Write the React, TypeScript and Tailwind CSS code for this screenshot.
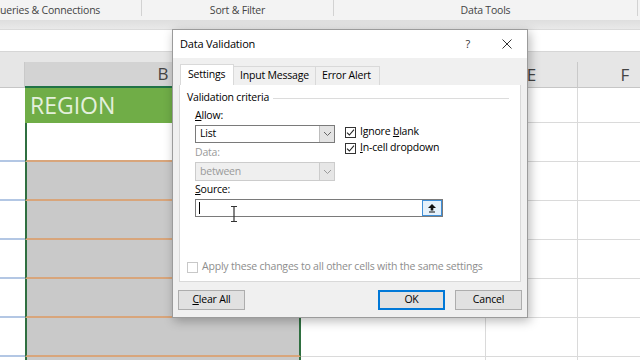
import React from "react";

function Check({ checked, disabled }: { checked?: boolean; disabled?: boolean }) {
  return (
    <div
      className={
        "w-[11px] h-[11px] shrink-0 flex items-center justify-center border bg-white " +
        (disabled ? "border-[#c8c8c8]" : "border-[#333333]")
      }
    >
      {checked && (
        <svg width="9" height="9" viewBox="0 0 9 9">
          <polyline points="1,4.6 3.4,7 8,1.6" fill="none" stroke="#222" strokeWidth="1.1" />
        </svg>
      )}
    </div>
  );
}

function Chevron({ color }: { color: string }) {
  return (
    <svg width="9" height="6" viewBox="0 0 9 6">
      <polyline points="1,1 4.5,4.5 8,1" fill="none" stroke={color} strokeWidth="1" />
    </svg>
  );
}

export default function App() {
  const rowHeights = [39, 39, 39, 39, 39, 39, 39];
  return (
    <div className="relative w-[640px] h-[360px] overflow-hidden bg-white font-['Open_Sans',sans-serif]">
      {/* Ribbon group labels */}
      <div className="flex h-[20px] bg-[#f3f3f3] text-[10.5px] text-[#444444] tracking-[-0.2px]">
        <div className="w-[141px] shrink-0 flex items-start pt-[3px]">
          <span className="whitespace-nowrap">ueries &amp; Connections</span>
        </div>
        <div className="w-px shrink-0 h-[16px] bg-[#d2d2d2]" />
        <div className="w-[191px] shrink-0 flex justify-center pt-[3px]">
          <span>Sort &amp; Filter</span>
        </div>
        <div className="w-px shrink-0 h-[16px] bg-[#d2d2d2]" />
        <div className="w-[303px] shrink-0 flex justify-center pt-[3px]">
          <span>Data Tools</span>
        </div>
        <div className="w-px shrink-0 h-[16px] bg-[#d2d2d2]" />
      </div>
      {/* shadow strip */}
      <div className="h-[9px] bg-gradient-to-b from-[#dedede] to-[#e9e9e9]" />
      {/* formula bar */}
      <div className="h-[22px] bg-white border-t border-[#dadada]" />
      {/* band */}
      <div className="h-[11px] bg-[#e6e6e6] border-t border-[#d6d6d6]" />
      {/* column headers */}
      <div className="flex h-[26px] bg-[#e6e6e6] text-[17px] text-[#444444]">
        <div className="w-[25px] shrink-0 border-r border-[#c9c9c9] border-b border-b-[#c6c6c6]" />
        <div className="w-[276px] shrink-0 bg-[#d3d3d3] border-b-2 border-b-[#217346] flex items-center justify-center">
          <span>B</span>
        </div>
        <div className="w-[185px] shrink-0 border-r border-[#c9c9c9] border-b border-b-[#c6c6c6]" />
        <div className="w-[92px] shrink-0 border-r border-[#c9c9c9] border-b border-b-[#c6c6c6] flex items-center justify-center">
          <span>E</span>
        </div>
        <div className="w-[94px] shrink-0 border-b border-b-[#c6c6c6] flex items-center justify-center">
          <span>F</span>
        </div>
      </div>
      {/* row 1 */}
      <div className="flex h-[35px]">
        <div className="w-[25px] shrink-0 bg-white" />
        <div className="w-[276px] shrink-0 bg-[#70ad47] flex items-center pl-[5px]">
          <span className="text-[23px] text-[#e4f0dc] leading-none">REGION</span>
        </div>
        <div className="w-[185px] shrink-0 border-r border-[#dadada] border-b border-b-[#dadada]" />
        <div className="w-[92px] shrink-0 border-r border-[#dadada] border-b border-b-[#dadada]" />
        <div className="w-[94px] shrink-0 border-b border-b-[#dadada]" />
      </div>
      {rowHeights.map((h, i) => (
        <div key={i} className="flex" style={{ height: h }}>
          <div className="w-[25px] shrink-0 bg-white border-b-2 border-b-[#b3c7e4]" />
          <div
            className={
              "w-[276px] shrink-0 border-l-2 border-r-2 border-[#2f6f40] border-b-2 border-b-[#d8a57b] " +
              (i === 0 ? "bg-white" : "bg-[#c9c9c9]")
            }
          />
          <div className="w-[185px] shrink-0 border-r border-[#dadada] border-b border-b-[#dadada]" />
          <div className="w-[92px] shrink-0 border-r border-[#dadada] border-b border-b-[#dadada]" />
          <div className="w-[94px] shrink-0 border-b border-b-[#dadada]" />
        </div>
      ))}

      {/* Dialog */}
      <div className="absolute left-[172px] top-[29px] w-[356px] h-[289px] bg-[#f0f0f0] border border-[#9b9b9b] shadow-[2px_3px_10px_rgba(0,0,0,0.28)] flex flex-col text-[10.5px] text-black tracking-[-0.2px]">
        {/* title bar */}
        <div className="h-[28px] bg-white flex items-center pl-[7px] pr-[15px] shrink-0">
          <span className="text-[11px]">Data Validation</span>
          <span className="ml-auto mr-[32px] text-[11px] text-[#333]">?</span>
          <svg width="10" height="10" viewBox="0 0 10 10">
            <path d="M0.5 0.5 L9.5 9.5 M9.5 0.5 L0.5 9.5" stroke="#333" strokeWidth="1" />
          </svg>
        </div>
        {/* tabs */}
        <div className="flex items-end h-[27px] pl-[7px] shrink-0">
          <div className="h-[21px] w-[54px] bg-white border border-b-0 border-[#d9d9d9] flex items-center pl-[7px]">
            Settings
          </div>
          <div className="h-[19px] w-[82px] bg-[#f0f0f0] border border-l-0 border-b-0 border-[#d9d9d9] flex items-center pl-[6px]">
            Input Message
          </div>
          <div className="h-[19px] w-[64px] bg-[#f0f0f0] border border-l-0 border-b-0 border-[#d9d9d9] flex items-center pl-[6px]">
            Error Alert
          </div>
        </div>
        {/* panel */}
        <div className="mx-[6px] h-[197px] bg-white border border-t-0 border-[#d9d9d9] flex flex-col pt-[6px] px-[7px] pb-[7px] shrink-0">
          <div className="flex items-center h-[14px]">
            <span>Validation criteria</span>
            <div className="flex-1 ml-[4px] mr-[4px] border-t border-[#dcdcdc]" />
          </div>
          <div className="flex pl-[8px]">
            <div className="w-[140px] flex flex-col">
              <div className="h-[14px] mt-[4px] flex items-center">
                <span>
                  <u>A</u>llow:
                </span>
              </div>
              <div className="mt-[2px] h-[18px] border border-[#7a7a7a] bg-white flex items-center">
                <span className="pl-[4px]">List</span>
                <div className="ml-auto h-full w-[15px] bg-[#e3e3e3] border-l border-[#bdbdbd] flex items-center justify-center">
                  <Chevron color="#666" />
                </div>
              </div>
              <div className="h-[14px] mt-[3px] flex items-center text-[#9a9a9a]">Data:</div>
              <div className="mt-[2px] h-[19px] border border-[#cccccc] bg-[#efefef] flex items-center text-[#9a9a9a]">
                <span className="pl-[4px]">between</span>
                <div className="ml-auto h-full w-[15px] bg-[#e6e6e6] border-l border-[#cccccc] flex items-center justify-center">
                  <Chevron color="#9a9a9a" />
                </div>
              </div>
            </div>
            <div className="ml-[10px] pt-[19px] flex flex-col">
              <div className="h-[16px] flex items-center gap-[4px]">
                <Check checked />
                <span>
                  Ignore <u>b</u>lank
                </span>
              </div>
              <div className="h-[16px] flex items-center gap-[4px]">
                <Check checked />
                <span>
                  <u>I</u>n-cell dropdown
                </span>
              </div>
            </div>
          </div>
          <div className="pl-[8px]">
            <div className="h-[14px] mt-[2px] flex items-center">
              <span>
                <u>S</u>ource:
              </span>
            </div>
            <div className="relative mt-[2px] h-[18px] w-[248px] border border-[#7a7a7a] bg-white flex items-center">
              <div className="ml-[3px] w-px h-[12px] bg-black" />
              <div className="ml-auto h-full w-[20px] bg-[#e5f1fb] border border-[#3f8fd8] flex items-center justify-center">
                <svg width="10" height="10" viewBox="0 0 10 10">
                  <path d="M5 1 L9 5 L6.3 5 L6.3 7.5 L3.7 7.5 L3.7 5 L1 5 Z" fill="#111" />
                  <rect x="2" y="8.5" width="6" height="1" fill="#111" />
                </svg>
              </div>
              <svg className="absolute left-[34px] top-[6px]" width="8" height="16" viewBox="0 0 8 16">
                <path d="M1 0.5 H7 M4 0.5 V15.5 M1 15.5 H7" stroke="#333" strokeWidth="1.2" fill="none" />
              </svg>
            </div>
          </div>
          <div className="mt-auto flex items-center h-[14px] gap-[4px] text-[#8d8d8d]">
            <Check disabled />
            <span>Apply these changes to all other cells with the same settings</span>
          </div>
        </div>
        {/* buttons */}
        <div className="flex items-center mt-[8px] px-[5px]">
          <div className="w-[67px] h-[20px] bg-[#e1e1e1] border border-[#adadad] flex items-center justify-center">
            <span>
              <u>C</u>lear All
            </span>
          </div>
          <div className="ml-auto w-[67px] h-[20px] bg-[#e1e1e1] border border-[#0078d7] shadow-[inset_0_0_0_1px_#0078d7] flex items-center justify-center">
            OK
          </div>
          <div className="ml-[10px] w-[67px] h-[20px] bg-[#e1e1e1] border border-[#adadad] flex items-center justify-center">
            Cancel
          </div>
        </div>
      </div>
    </div>
  );
}
